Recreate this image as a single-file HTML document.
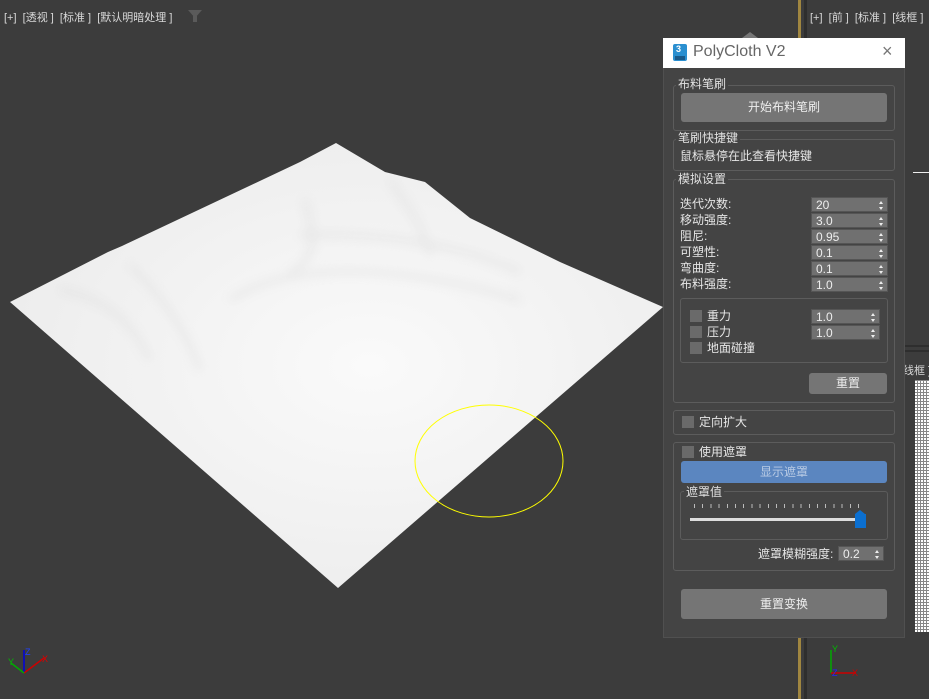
<!DOCTYPE html>
<html><head><meta charset="utf-8"><style>
*{margin:0;padding:0;box-sizing:border-box}
body{width:929px;height:699px;overflow:hidden;background:#3c3c3c;position:relative;font-family:"Liberation Sans","Noto Sans CJK SC",sans-serif;color:#dcdcdc;font-size:12px}
.a{position:absolute;white-space:nowrap}
.vt{color:#d8d8d8;font-size:11px}
.grp{position:absolute;border:1px solid #5c5c5c;border-radius:3px}
.lbl{position:absolute;background:#444;padding:0 2px;font-size:12px;line-height:13px;color:#e0e0e0}
.btn{position:absolute;background:#757575;border-radius:3px;text-align:center;color:#eee;font-size:12px}
.sp{position:absolute;background:#707070;height:15px;font-size:12px;line-height:15px;padding-left:4px;color:#eee;border:1px solid #555}
.sp:after{content:"";position:absolute;right:4px;top:3px;width:0;height:0;border:2px solid transparent;border-bottom:3px solid #eee;border-top:none}
.sp:before{content:"";position:absolute;right:4px;top:9px;width:0;height:0;border:2px solid transparent;border-top:3px solid #eee;border-bottom:none}
.cb{position:absolute;width:12px;height:12px;background:#6a6a6a}
.t{position:absolute;font-size:12px;line-height:14px;color:#e6e6e6}
</style></head><body>
<div class="a vt" style="left:4px;top:9px">[+] &nbsp;[透视 ] &nbsp;[标准 ] &nbsp;[默认明暗处理 ]</div>
<div class="a" style="left:188px;top:10px;width:0;height:0;border-left:7px solid transparent;border-right:7px solid transparent;border-top:8px solid #5a5a5a"></div>
<div class="a" style="left:193px;top:16px;width:4px;height:6px;background:#5a5a5a"></div>
<div class="a" style="left:798px;top:0;width:3px;height:699px;background:#a08640"></div>
<div class="a" style="left:804px;top:0;width:3px;height:699px;background:#2e2e2e"></div>
<div class="a vt" style="left:810px;top:9px">[+] &nbsp;[前 ] &nbsp;[标准 ] &nbsp;[线框 ]</div>
<div class="a" style="left:742px;top:32px;width:0;height:0;border-left:8px solid transparent;border-right:8px solid transparent;border-bottom:6px solid #777"></div>
<div class="a" style="left:913px;top:172px;width:16px;height:1px;background:#eee"></div>
<div class="a" style="left:905px;top:345px;width:24px;height:2px;background:#2e2e2e"></div>
<div class="a" style="left:905px;top:350px;width:24px;height:2px;background:#2e2e2e"></div>
<div class="a vt" style="left:903px;top:362px">线框 ]</div>
<div class="a" style="left:915px;top:380px;width:14px;height:252px;background:#fff"></div>
<div class="a" style="left:915px;top:380px;width:14px;height:252px;background:repeating-linear-gradient(0deg,transparent 0 2px,#555 2px 3px),repeating-linear-gradient(90deg,transparent 0 2px,#555 2px 3px);opacity:.7"></div>
<svg class="a" style="left:0;top:0" width="800" height="699">
<defs>
<radialGradient id="g" cx="0.55" cy="0.5" r="0.6"><stop offset="0" stop-color="#fafafa"/><stop offset="1" stop-color="#ececec"/></radialGradient>
<filter id="bl"><feGaussianBlur stdDeviation="5"/></filter>
<clipPath id="c"><path d="M10,302 L108,252 L122,246 L300,162 L336,143 L385,172 L425,182 L470,218 L560,262 L663,307 L338,588 Z"/></clipPath>
</defs>
<path d="M10,302 L108,252 L122,246 L300,162 L336,143 L385,172 L425,182 L470,218 L560,262 L663,307 L338,588 Z" fill="url(#g)"/>
<g clip-path="url(#c)"><g filter="url(#bl)" fill="none" stroke="#d8d8d8" stroke-width="5" opacity=".45">
<path d="M130,265 C165,300 185,330 200,370"/>
<path d="M305,200 C315,235 318,260 290,272"/>
<path d="M390,180 C410,210 425,230 430,255"/>
<path d="M230,300 C300,255 420,270 520,300"/>
<path d="M300,235 C380,232 460,245 520,272"/>
<path d="M60,290 C120,300 140,340 150,360"/>
</g></g>
<ellipse cx="489" cy="461" rx="74" ry="56" fill="none" stroke="#ffff00" stroke-width="1"/>
<g stroke-width="1.5"><line x1="24" y1="673" x2="24" y2="650" stroke="#0000e0"/><line x1="24" y1="673" x2="44" y2="658" stroke="#c00"/><line x1="24" y1="673" x2="11" y2="663" stroke="#0a0"/></g>
<text x="25" y="655" fill="#2040ff" font-size="9" font-family="Liberation Sans">Z</text><text x="42" y="662" fill="#d00" font-size="9" font-family="Liberation Sans">X</text><text x="8" y="665" fill="#0b0" font-size="9" font-family="Liberation Sans">Y</text>
</svg>
<svg class="a" style="left:826px;top:640px" width="60" height="40"><line x1="5" y1="10" x2="5" y2="33" stroke="#0a0" stroke-width="1.5"/><line x1="5" y1="33" x2="30" y2="33" stroke="#c00" stroke-width="1.5"/><text x="6" y="12" fill="#0b0" font-size="9" font-family="Liberation Sans">Y</text><text x="6" y="36" fill="#22f" font-size="9" font-family="Liberation Sans">Z</text><text x="26" y="36" fill="#c00" font-size="9" font-family="Liberation Sans">X</text></svg>

<div class="a" style="left:663px;top:38px;width:242px;height:600px;background:#444;border:1px solid #505050"></div>
<div class="a" style="left:663px;top:38px;width:242px;height:30px;background:#fff"></div>
<div class="a" style="left:673px;top:44px;width:14px;height:17px;background:#2a8fd0;border-radius:2px"></div>
<div class="a" style="left:676px;top:44px;font-size:9px;color:#fff;font-weight:bold">3</div>
<div class="a" style="left:675px;top:56px;width:10px;height:4px;background:#1a5a8a"></div>
<div class="a" style="left:693px;top:43px;font-size:16px;color:#666">PolyCloth V2</div>
<div class="a" style="left:882px;top:41px;font-size:18px;color:#777">×</div>

<div class="grp" style="left:673px;top:85px;width:222px;height:46px"></div>
<div class="lbl" style="left:676px;top:78px">布料笔刷</div>
<div class="btn" style="left:681px;top:93px;width:206px;height:29px;line-height:29px">开始布料笔刷</div>

<div class="grp" style="left:673px;top:139px;width:222px;height:32px"></div>
<div class="lbl" style="left:676px;top:132px">笔刷快捷键</div>
<div class="t" style="left:680px;top:149px">鼠标悬停在此查看快捷键</div>

<div class="grp" style="left:673px;top:179px;width:222px;height:224px"></div>
<div class="lbl" style="left:676px;top:173px">模拟设置</div>
<div class="t" style="left:680px;top:197px">迭代次数:</div><div class="sp" style="left:811px;top:197px;width:77px">20</div>
<div class="t" style="left:680px;top:213px">移动强度:</div><div class="sp" style="left:811px;top:213px;width:77px">3.0</div>
<div class="t" style="left:680px;top:229px">阻尼:</div><div class="sp" style="left:811px;top:229px;width:77px">0.95</div>
<div class="t" style="left:680px;top:245px">可塑性:</div><div class="sp" style="left:811px;top:245px;width:77px">0.1</div>
<div class="t" style="left:680px;top:261px">弯曲度:</div><div class="sp" style="left:811px;top:261px;width:77px">0.1</div>
<div class="t" style="left:680px;top:277px">布料强度:</div><div class="sp" style="left:811px;top:277px;width:77px">1.0</div>
<div class="grp" style="left:680px;top:298px;width:208px;height:65px"></div>
<div class="cb" style="left:690px;top:310px"></div><div class="t" style="left:707px;top:309px">重力</div><div class="sp" style="left:811px;top:309px;width:69px">1.0</div>
<div class="cb" style="left:690px;top:326px"></div><div class="t" style="left:707px;top:325px">压力</div><div class="sp" style="left:811px;top:325px;width:69px">1.0</div>
<div class="cb" style="left:690px;top:342px"></div><div class="t" style="left:707px;top:341px">地面碰撞</div>
<div class="btn" style="left:809px;top:373px;width:78px;height:21px;line-height:21px">重置</div>

<div class="grp" style="left:673px;top:410px;width:222px;height:25px"></div>
<div class="cb" style="left:682px;top:416px"></div><div class="t" style="left:699px;top:415px">定向扩大</div>

<div class="grp" style="left:673px;top:442px;width:222px;height:129px"></div>
<div class="cb" style="left:682px;top:446px"></div><div class="t" style="left:699px;top:445px">使用遮罩</div>
<div class="btn" style="left:681px;top:461px;width:206px;height:22px;line-height:22px;background:#5b86c0;color:#b9cbe4">显示遮罩</div>
<div class="grp" style="left:680px;top:491px;width:208px;height:49px"></div>
<div class="lbl" style="left:684px;top:486px">遮罩值</div>
<div class="a" style="left:694px;top:504px;width:166px;height:4px;background:repeating-linear-gradient(90deg,#bbb 0 1px,transparent 1px 8.2px)"></div>
<div class="a" style="left:690px;top:518px;width:168px;height:3px;background:#ddd"></div>
<div class="a" style="left:855px;top:514px;width:11px;height:14px;background:#0b6fd0"></div>
<div class="a" style="left:855px;top:510px;width:0;height:0;border-left:5.5px solid transparent;border-right:5.5px solid transparent;border-bottom:4px solid #0b6fd0"></div>
<div class="t" style="left:758px;top:547px">遮罩模糊强度:</div><div class="sp" style="left:838px;top:546px;width:46px">0.2</div>

<div class="btn" style="left:681px;top:589px;width:206px;height:30px;line-height:30px">重置变换</div>
</body></html>
